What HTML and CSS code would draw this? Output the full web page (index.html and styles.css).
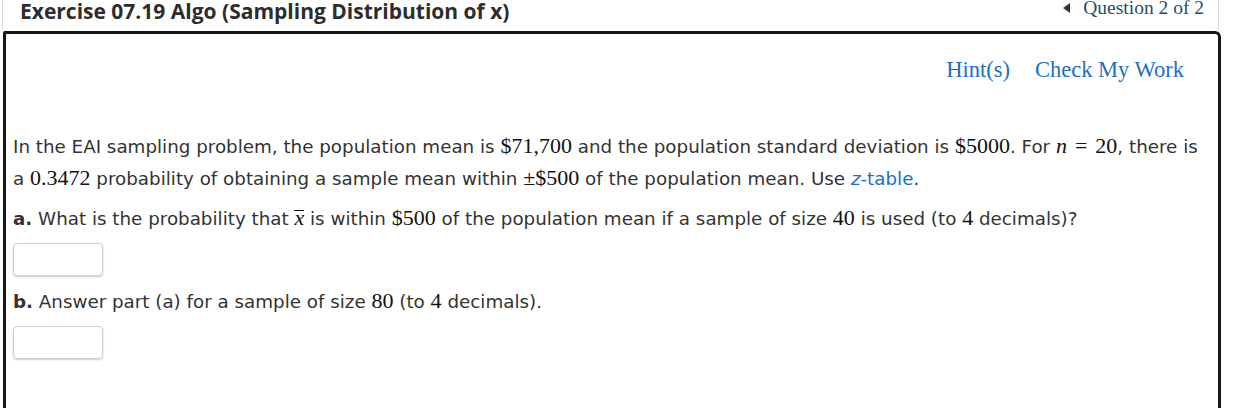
FILE: index.html
```html
<!DOCTYPE html>
<html>
<head>
<meta charset="utf-8">
<link rel="stylesheet" href="styles.css">
</head>
<body>
<div class="header">
  <h1 class="title">Exercise 07.19 Algo (Sampling Distribution of x)</h1>
  <div class="qnav"><span class="tri"></span>Question 2 of 2</div>
</div>
<div class="box">
  <div class="tools">
    <a class="tool">Hint(s)</a>
    <a class="tool">Check My Work</a>
  </div>
  <p class="intro">In the EAI sampling problem, the population mean is <span class="m">$71,700</span> and the population standard deviation is <span class="m">$5000</span>. For <span class="m"><i>n</i><span class="op">=</span>20</span>, there is a <span class="m">0.3472</span> probability of obtaining a sample mean within <span class="m">±$500</span> of the population mean. Use <a class="link"><i>z</i>-table</a>.</p>
  <p class="part pa"><b>a.</b> What is the probability that <span class="m"><i class="bar">x</i></span> is within <span class="m">$500</span> of the population mean if a sample of size <span class="m">40</span> is used (to <span class="m">4</span> decimals)?</p>
  <div class="input"></div>
  <p class="part"><b>b.</b> Answer part (a) for a sample of size <span class="m">80</span> (to <span class="m">4</span> decimals).</p>
  <div class="input"></div>
</div>
</body>
</html>
```
FILE: styles.css
```css
html, body { margin: 0; padding: 0; background: #fff; }
body { width: 1233px; height: 408px; overflow: hidden; }
.header {
  display: flex;
  justify-content: space-between;
  align-items: flex-start;
  height: 29px;
  margin-left: 2px;
  width: 1217px;
  border-left: 1px solid #d6d6d6;
  border-right: 1px solid #d6d6d6;
  box-sizing: border-box;
}
.title {
  margin: 0;
  padding-left: 17px;
  font-family: "Open Sans", sans-serif;
  font-weight: 700;
  font-size: 21px;
  line-height: 22px;
  color: #2d2d2d;
}
.qnav {
  font-family: "Liberation Serif", serif;
  font-size: 19.5px;
  line-height: 16px;
  color: #2c4a6b;
  padding-right: 14px;
  display: flex;
  align-items: center;
}
.tri {
  width: 0; height: 0;
  border-top: 5px solid transparent;
  border-bottom: 5px solid transparent;
  border-right: 7px solid #333;
  margin-right: 13px;
}
.box {
  margin-top: 2px;
  margin-left: 3px;
  width: 1218px;
  height: 377px;
  box-sizing: border-box;
  border: 3px solid #161616;
  border-bottom: 0;
  border-radius: 2px 6px 0 0;
  padding: 22px 7px 0 7px;
}
.tools {
  display: flex;
  justify-content: flex-end;
  gap: 25px;
  padding-right: 27px;
}
.tool {
  font-family: "Liberation Serif", serif;
  font-size: 22.5px;
  line-height: 28px;
  color: #1d6fc2;
}
.intro, .part {
  font-family: "DejaVu Sans", Verdana, sans-serif;
  font-size: 18.3px;
  color: #333;
  margin: 0;
}
.intro { margin-top: 46px; line-height: 31px; }
.part { line-height: 24px; margin-top: 13px; }
.pa { margin-top: 12px; }
.m {
  font-family: "Liberation Serif", serif;
  font-size: 22px;
  color: #111;
}
.op { margin: 0 8px; }
.link { color: #1d6fc2; }
.bar {
  display: inline-block;
  border-top: 1.5px solid #111;
  line-height: 12px;
  padding-top: 1px;
}
.input {
  width: 88px;
  height: 31px;
  border: 1px solid #cfcfcf;
  border-radius: 4px;
  box-shadow: 0 1px 2px rgba(0,0,0,0.2);
  margin-top: 12px;
}
```
